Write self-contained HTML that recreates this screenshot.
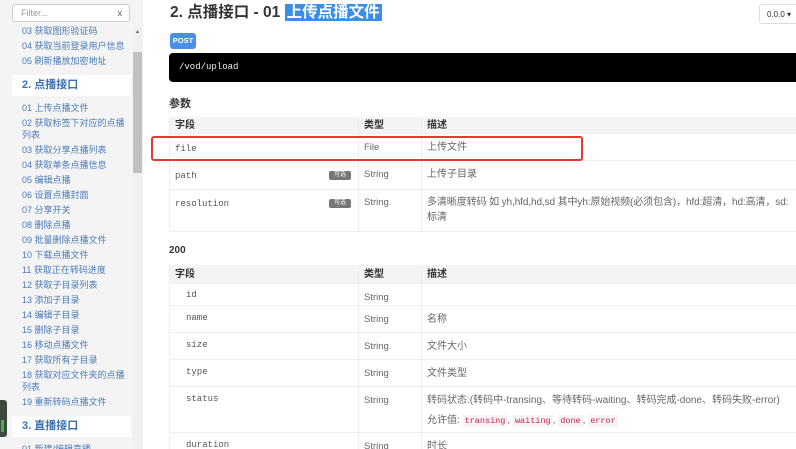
<!DOCTYPE html>
<html><head><meta charset="utf-8"><style>
*{margin:0;padding:0;box-sizing:border-box}
html,body{width:796px;height:449px;overflow:hidden}
body{background:#fff;font-family:"Liberation Sans","Noto Sans CJK SC",sans-serif;position:relative}
.a{position:absolute;white-space:nowrap}
#sb{position:absolute;left:0;top:0;width:143px;height:449px;background:#f4f4f4;overflow:hidden}
.it{position:absolute;left:22px;font-size:9px;color:#4a7ab8;line-height:12px}
.hd{position:absolute;left:12px;width:119px;height:21px;background:#fff;font-size:11px;font-weight:bold;color:#3b6fb0;padding-left:10px;line-height:21px}
.r{position:absolute;left:169px;width:627px;border-bottom:1px solid #eee;font-size:9.5px;color:#666}
.th{background:#f4f4f4;font-weight:bold;color:#333;font-size:10px}
.c1,.c2,.c3{position:absolute;top:0;height:100%;padding:7px 5px 0;line-height:14px}
.th .c1,.th .c2,.th .c3{padding-top:2px}
.c1{left:0;width:189px;border-left:1px solid #eee}
.c2{left:189px;width:63px;border-left:1px solid #eee}
.c3{left:252px;width:375px;border-left:1px solid #eee;white-space:normal;font-size:10px}
.m{font-family:"Liberation Mono",monospace;color:#555;font-size:9px;padding-top:8px}
.s{padding-left:16px}
.opt{position:absolute;left:159px;top:10px;width:22px;height:9px;background:#777;border-radius:2px;color:#fff;font-size:6px;text-align:center;line-height:9px;font-family:"Liberation Sans","Noto Sans CJK SC",sans-serif}
code{font-family:"Liberation Mono",monospace;color:#c7254e;background:#f9f2f4;padding:1px 2px;font-size:8.5px}
</style></head><body>
<div id="sb">
<div class="a" style="left:12px;top:4px;width:118px;height:18px;background:#fff;border:1px solid #ccc;border-radius:3px;font-size:9px;color:#999;padding:3px 8px">Filter...<span style="position:absolute;right:7px;color:#555">x</span></div>
<div class="a" style="left:133px;top:27px;width:9px;height:422px;background:#f0f0f0"></div>
<div class="a" style="left:135px;top:29px;font-size:5px;color:#555">▲</div>
<div class="a" style="left:133px;top:52px;width:9px;height:121px;background:#c1c1c1"></div>
<div class="it" style="top:25px">03 获取图形验证码</div>
<div class="it" style="top:40px">04 获取当前登录用户信息</div>
<div class="it" style="top:55px">05 刷新播放加密地址</div>
<div class="hd" style="top:75px">2. 点播接口</div>
<div class="it" style="top:102px">01 上传点播文件</div>
<div class="it" style="top:117px;white-space:normal;width:105px">02 获取标签下对应的点播列表</div>
<div class="it" style="top:144px">03 获取分享点播列表</div>
<div class="it" style="top:159px">04 获取单条点播信息</div>
<div class="it" style="top:174px">05 编辑点播</div>
<div class="it" style="top:189px">06 设置点播封面</div>
<div class="it" style="top:204px">07 分享开关</div>
<div class="it" style="top:219px">08 删除点播</div>
<div class="it" style="top:234px">09 批量删除点播文件</div>
<div class="it" style="top:249px">10 下载点播文件</div>
<div class="it" style="top:264px">11 获取正在转码进度</div>
<div class="it" style="top:279px">12 获取子目录列表</div>
<div class="it" style="top:294px">13 添加子目录</div>
<div class="it" style="top:309px">14 编辑子目录</div>
<div class="it" style="top:324px">15 删除子目录</div>
<div class="it" style="top:339px">16 移动点播文件</div>
<div class="it" style="top:354px">17 获取所有子目录</div>
<div class="it" style="top:369px;white-space:normal;width:105px">18 获取对应文件夹的点播列表</div>
<div class="it" style="top:396px">19 重新转码点播文件</div>
<div class="hd" style="top:416px">3. 直播接口</div>
<div class="it" style="top:443px">01 新建/编辑直播</div>
<div class="a" style="left:0;top:400px;width:7px;height:37px;background:#3c4a3e;border-radius:0 3px 3px 0"></div>
<div class="a" style="left:1px;top:420px;width:3px;height:12px;background:#4caf50"></div>
</div>

<div class="a" style="left:170px;top:2px;font-size:15.5px;font-weight:bold;color:#333;line-height:21px">2. 点播接口 - 01 <span style="background:#3a8ee6;color:#fff;padding:0 2px">上传点播文件</span></div>
<div class="a" style="left:759px;top:4px;width:40px;height:20px;border:1px solid #ddd;border-radius:3px;font-size:8px;color:#333;padding:5px 7px">0.0.0 ▾</div>
<div class="a" style="left:170px;top:33px;width:26px;height:16px;background:#4a8ee8;border-radius:3px;color:#fff;font-size:7.5px;font-weight:bold;text-align:center;line-height:16px">POST</div>
<div class="a" style="left:169px;top:53px;width:640px;height:29px;background:#000;border-radius:4px;color:#eee;font-family:'Liberation Mono',monospace;font-size:9px;padding:9px 10px">/vod/upload</div>
<div class="a" style="left:169px;top:95px;font-size:11px;font-weight:bold;color:#333">参数</div>

<div class="r th" style="top:117px;height:17px"><div class="c1">字段</div><div class="c2">类型</div><div class="c3">描述</div></div>
<div class="r" style="top:134px;height:27px"><div class="c1 m">file</div><div class="c2">File</div><div class="c3">上传文件</div></div>
<div class="r" style="top:161px;height:29px"><div class="c1 m">path<span class="opt">可选</span></div><div class="c2">String</div><div class="c3">上传子目录</div></div>
<div class="r" style="top:190px;height:42px"><div class="c1 m" style="padding-top:7px">resolution<span class="opt" style="top:9px">可选</span></div><div class="c2" style="padding-top:6px">String</div><div class="c3" style="padding-top:5px;padding-right:4px;line-height:15px;letter-spacing:-0.1px">多清晰度转码 如 yh,hfd,hd,sd 其中yh:原始视频(必须包含)，hfd:超清，hd:高清，sd:标清</div></div>
<div class="a" style="left:151px;top:136px;width:432px;height:25px;border:2px solid #e53935;border-radius:3px"></div>

<div class="a" style="left:169px;top:245px;font-size:10px;font-weight:bold;color:#333">200</div>
<div class="r th" style="top:265px;height:19px"><div class="c1" style="padding-top:3px">字段</div><div class="c2" style="padding-top:3px">类型</div><div class="c3" style="padding-top:3px">描述</div></div>
<div class="r" style="top:284px;height:22px"><div class="c1 m s" style="padding-top:4px">id</div><div class="c2" style="padding-top:7px">String</div><div class="c3"></div></div>
<div class="r" style="top:306px;height:27px"><div class="c1 m s" style="padding-top:5px">name</div><div class="c2">String</div><div class="c3">名称</div></div>
<div class="r" style="top:333px;height:27px"><div class="c1 m s" style="padding-top:5px">size</div><div class="c2">String</div><div class="c3">文件大小</div></div>
<div class="r" style="top:360px;height:27px"><div class="c1 m s" style="padding-top:5px">type</div><div class="c2">String</div><div class="c3">文件类型</div></div>
<div class="r" style="top:387px;height:46px"><div class="c1 m s" style="padding-top:5px">status</div><div class="c2">String</div><div class="c3" style="padding-top:4px;line-height:20px">转码状态:(转码中-transing、等待转码-waiting、转码完成-done、转码失败-error)<br>允许值: <code>transing</code>, <code>waiting</code>, <code>done</code>, <code>error</code></div></div>
<div class="r" style="top:433px;height:30px"><div class="c1 m s" style="padding-top:5px">duration</div><div class="c2">String</div><div class="c3">时长</div></div>
</body></html>
